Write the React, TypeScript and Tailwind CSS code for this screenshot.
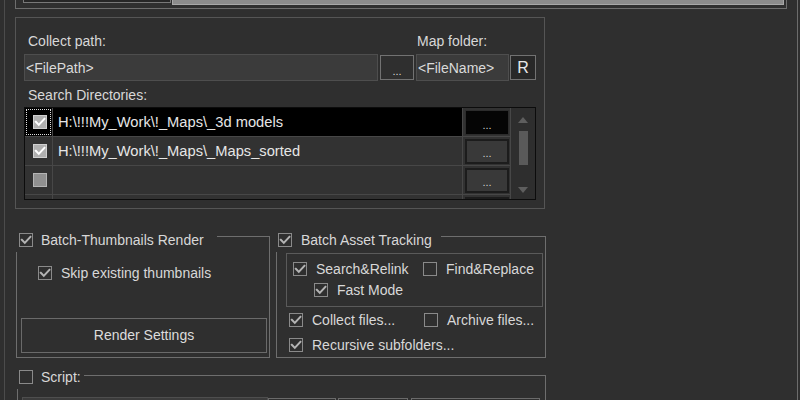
import React from "react";

const CheckMark = ({ color }: { color: string }) => (
  <svg width="12" height="12" viewBox="0 0 12 12">
    <path d="M1.8 5.8 L4.8 8.9 L10.4 2.8" fill="none" stroke={color} strokeWidth="2" strokeLinecap="square" />
  </svg>
);

const GBox = ({ checked }: { checked: boolean }) => (
  <span className="flex h-[14px] w-[14px] shrink-0 items-center justify-center border border-[#8a8a8a] bg-[#2f2f2f]">
    {checked && <CheckMark color="#b4b4b4" />}
  </span>
);

const LBox = ({ checked }: { checked: boolean }) =>
  checked ? (
    <span className="flex h-[14px] w-[14px] shrink-0 items-center justify-center border border-[#d0d0d0] bg-[#b0b0b0]">
      <CheckMark color="#ffffff" />
    </span>
  ) : (
    <span className="flex h-[14px] w-[14px] shrink-0 border border-[#b4b4b4] bg-[#909090]" />
  );

const Opt = ({ checked, label, w }: { checked: boolean; label: string; w?: string }) => (
  <div className={`flex h-[16px] items-center gap-[9px] ${w ?? ""}`}>
    <GBox checked={checked} />
    <span className="leading-[16px]">{label}</span>
  </div>
);

const rows = [
  { checked: true, text: "H:\\!!!My_Work\\!_Maps\\_3d models", sel: true, last: false },
  { checked: true, text: "H:\\!!!My_Work\\!_Maps\\_Maps_sorted", sel: false, last: false },
  { checked: false, text: "", sel: false, last: false },
  { checked: false, text: "", sel: false, last: true },
];

export default function App() {
  return (
    <div className="h-[400px] w-[800px] overflow-hidden bg-[#2f2f2f] font-['Liberation_Sans',Arial,sans-serif] text-[14px] text-[#d8d8d8]">
      <div className="ml-[4px] flex h-[400px] w-[794px] flex-col border-x border-l-[#4c4c4c] border-r-[#6c6c6c]">
        {/* top strip */}
        <div className="ml-[10px] flex h-[9px] w-[772px] shrink-0 items-start border-x border-b border-[#6e6e6e]">
          <div className="ml-[7px] h-[3px] w-[148px] border-x border-b border-[#787878] bg-[#262626]" />
          <div className="ml-[1px] h-[5px] w-[612px] border-x border-b border-[#a8a8a8] bg-[#8c8c8c]" />
        </div>

        {/* group 1 */}
        <div className="ml-[10px] mt-[8px] h-[192px] w-[530px] shrink-0 border border-[#555555] pl-[8px] pt-[15px]">
          <div className="flex h-[16px] leading-[16px]">
            <span className="w-[392px] pl-[4px]">Collect path:</span>
            <span className="pl-[1px]">Map folder:</span>
          </div>
          <div className="mt-[5px] flex h-[27px] items-center">
            <div className="flex h-[27px] w-[354px] items-center border border-[#4e4e4e] bg-[#3b3b3b] pl-[1px] leading-[16px] text-[#dadada]">
              &lt;FilePath&gt;
            </div>
            <div className="ml-[2px] flex h-[25px] w-[34px] items-end justify-center border border-[#727272] bg-[#2f2f2f] pb-[2px] text-[11px] leading-[12px]">
              ...
            </div>
            <div className="ml-[2px] flex h-[27px] w-[93px] items-center border border-[#4e4e4e] bg-[#3b3b3b] pl-[1px] leading-[16px] text-[#dadada]">
              &lt;FileName&gt;
            </div>
            <div className="ml-[1px] flex h-[25px] w-[26px] items-center justify-center border border-[#727272] bg-[#282828] text-[16px] text-[#e8e8e8]">
              R
            </div>
          </div>
          <div className="mt-[6px] h-[16px] pl-[4px] leading-[16px]">Search Directories:</div>
          <div className="mt-[4px] flex h-[93px] w-[512px] overflow-hidden border border-[#0c0c0c] bg-[#323232]">
            <div className="flex w-[486px] flex-col">
              {rows.map((r, i) => (
                <div key={i} className="flex h-[29px] shrink-0 border-b border-[#474747]">
                  <div
                    className={`relative flex w-[28px] shrink-0 items-center border-r border-[#474747] pl-[8px] ${
                      r.sel ? "bg-black" : ""
                    }`}
                  >
                    {!r.last && <LBox checked={r.checked} />}
                    {r.sel && (
                      <span className="absolute left-[1px] top-[1px] h-[26px] w-[25px] border border-dotted border-[#e0e0e0]" />
                    )}
                  </div>
                  <div
                    className={`flex w-[410px] shrink-0 items-center border-r border-[#474747] pl-[5px] text-[14.7px] text-[#e6e6e6] ${
                      r.sel ? "bg-black" : ""
                    }`}
                  >
                    {r.text}
                  </div>
                  <div className="flex w-[48px] shrink-0 items-center border-r border-[#474747] pl-[2px]">
                    <div
                      className={`flex h-[25px] w-[44px] items-end justify-center pb-[3px] text-[11px] leading-[12px] text-[#d0d0d0] ${
                        r.sel ? "border border-[#2c2c2c] bg-[#050505]" : "border-2 border-[#1c1c1c] bg-[#393939]"
                      }`}
                    >
                      {r.last ? "" : "..."}
                    </div>
                  </div>
                </div>
              ))}
            </div>
            <div className="flex w-[24px] flex-col items-center bg-[#2e2e2e] pt-[9px]">
              <svg width="10" height="6" viewBox="0 0 10 6">
                <path d="M5 0 L10 6 L0 6 Z" fill="#5e5e5e" />
              </svg>
              <div className="mt-[8px] h-[34px] w-[9px] bg-[#5a5a5a]" />
              <svg className="mt-[22px]" width="10" height="6" viewBox="0 0 10 6">
                <path d="M0 0 L10 0 L5 6 Z" fill="#5e5e5e" />
              </svg>
            </div>
          </div>
        </div>

        {/* row 2 */}
        <div className="ml-[11px] mt-[27px] flex shrink-0">
          <div className="relative h-[122px] w-[254px] border border-[#6e6e6e]">
            <div className="absolute left-[-4px] top-[-9px] flex h-[24px] items-center gap-[8px] bg-[#2f2f2f] pl-[6px] pr-[13px]">
              <GBox checked />
              <span className="leading-[16px]">Batch-Thumbnails Render</span>
            </div>
            <div className="ml-[21px] mt-[28px]">
              <Opt checked label="Skip existing thumbnails" />
            </div>
            <div className="ml-[4px] mt-[37px] flex h-[35px] w-[246px] items-center justify-center border border-[#6a6a6a] text-[#dcdcdc]">
              Render Settings
            </div>
          </div>

          <div className="relative ml-[6px] h-[122px] w-[270px] border border-[#6e6e6e]">
            <div className="absolute left-[-3px] top-[-9px] flex h-[24px] items-center gap-[9px] bg-[#2f2f2f] pl-[4px] pr-[9px]">
              <GBox checked />
              <span className="leading-[16px]">Batch Asset Tracking</span>
            </div>
            <div className="ml-[9px] mt-[16px] h-[54px] w-[257px] border border-[#5a5a5a] pl-[6px] pt-[7px]">
              <div className="flex">
                <Opt checked label="Search&Relink" w="w-[130px]" />
                <Opt checked={false} label="Find&Replace" />
              </div>
              <div className="ml-[21px] mt-[5px]">
                <Opt checked label="Fast Mode" />
              </div>
            </div>
            <div className="ml-[12px] mt-[5px] flex">
              <Opt checked label="Collect files..." w="w-[135px]" />
              <Opt checked={false} label="Archive files..." />
            </div>
            <div className="ml-[12px] mt-[9px]">
              <Opt checked label="Recursive subfolders..." />
            </div>
          </div>
        </div>

        {/* script group */}
        <div className="relative ml-[12px] mt-[17px] h-[60px] w-[529px] shrink-0 border border-[#6e6e6e]">
          <div className="absolute left-[-5px] top-[-11px] flex h-[24px] items-center gap-[8px] bg-[#2f2f2f] pl-[6px] pr-[3px]">
            <GBox checked={false} />
            <span className="leading-[16px]">Script:</span>
          </div>
          <div className="ml-[4px] mt-[21px] flex items-start">
            <div className="h-[20px] w-[246px] border border-[#4e4e4e] bg-[#3b3b3b]" />
            <div className="mt-[1px] h-[20px] w-[68px] border border-[#6a6a6a]" />
            <div className="ml-[2px] mt-[1px] h-[20px] w-[70px] border border-[#6a6a6a]" />
            <div className="ml-[3px] mt-[1px] h-[20px] w-[129px] border border-[#6a6a6a]" />
          </div>
        </div>
      </div>
    </div>
  );
}
